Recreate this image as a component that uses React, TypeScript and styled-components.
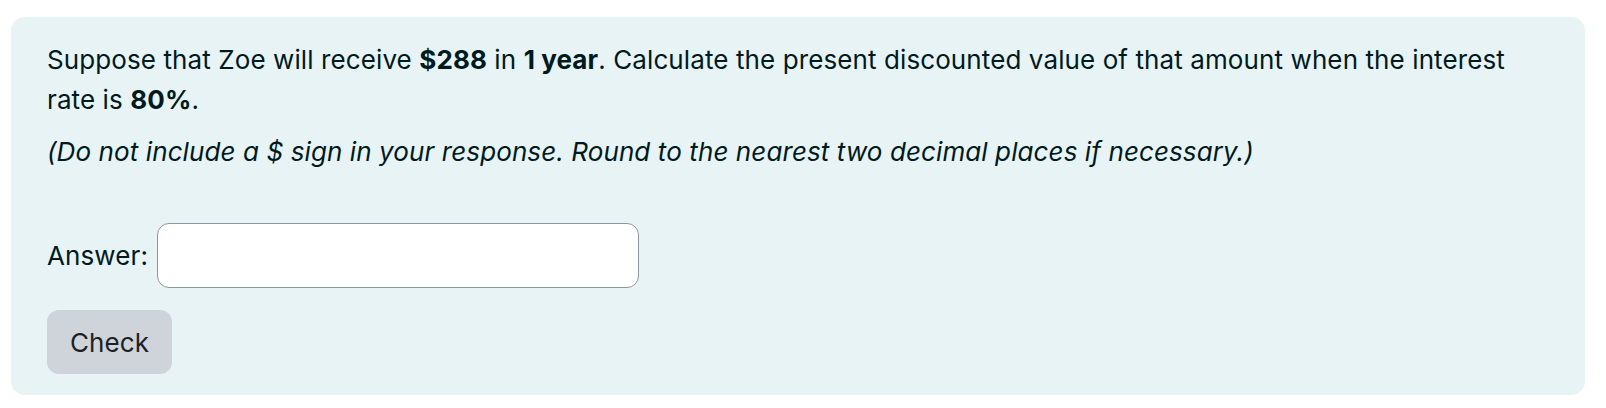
import styled, { createGlobalStyle } from 'styled-components';

const GlobalStyle = createGlobalStyle`
  body {
    margin: 0;
    background: #ffffff;
    font-family: Inter, "Noto Sans", "Liberation Sans", sans-serif;
  }
`;

const Page = styled.div`
  padding: 17px 21px 14px 11px;
`;

const Formulation = styled.div`
  background-color: #e7f3f5;
  color: #001a1e;
  border-radius: 14px;
  padding: 23px 60px 21px 36px;
  font-size: 26px;
  line-height: 40px;
  letter-spacing: 0.1px;
`;

const QText = styled.p`
  margin: 0 0 12px 0;
`;

const Hint = styled.p`
  margin: 0;
  font-style: italic;
`;

const AnswerRow = styled.div`
  display: flex;
  align-items: center;
  gap: 9px;
  margin-top: 51px;
`;

const Label = styled.label`
  color: #001a1e;
`;

const Input = styled.input`
  box-sizing: border-box;
  width: 482px;
  height: 65px;
  border: 1.5px solid #8f959e;
  border-radius: 12px;
  background: #ffffff;
  font: inherit;
  padding: 0 20px;
  outline: none;
`;

const Button = styled.button`
  margin-top: 22px;
  box-sizing: border-box;
  height: 64px;
  padding: 0 23px;
  border: none;
  border-radius: 12px;
  background-color: #ced4da;
  color: #1d2125;
  font-family: inherit;
  font-size: 26px;
  letter-spacing: 0.1px;
  cursor: pointer;
`;

export default function App() {
  return (
    <>
      <GlobalStyle />
      <Page>
        <Formulation>
          <QText>
            Suppose that Zoe will receive <b>$288</b> in <b>1 year</b>. Calculate the present
            discounted value of that amount when the interest rate is <b>80%</b>.
          </QText>
          <Hint>
            (Do not include a $ sign in your response. Round to the nearest two decimal places
            if necessary.)
          </Hint>
          <AnswerRow>
            <Label htmlFor="answer">Answer:</Label>
            <Input id="answer" type="text" />
          </AnswerRow>
          <Button type="button">Check</Button>
        </Formulation>
      </Page>
    </>
  );
}
